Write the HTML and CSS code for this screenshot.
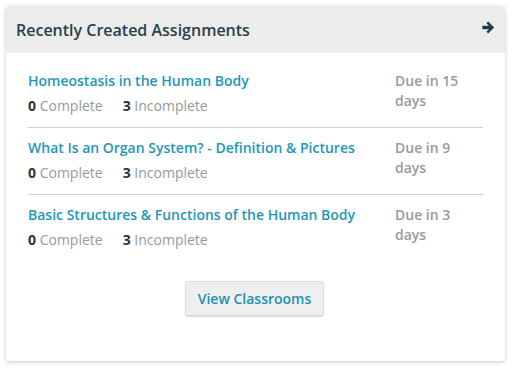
FILE: index.html
```html
<!DOCTYPE html>
<html>
<head>
<meta charset="utf-8">
<link rel="stylesheet" href="styles.css">
</head>
<body>
<div class="card">
  <div class="card-header">
    <h2 class="card-title">Recently Created Assignments</h2>
    <svg class="arrow" viewBox="0 0 12 12" width="13" height="13"><path d="M0.3 4.4H6.4L4.1 2.1L5.7 0.5L11.2 6L5.7 11.5L4.1 9.9L6.4 7.6H0.3Z" fill="#1d3b4c"/></svg>
  </div>
  <div class="card-body">
    <div class="item">
      <div class="item-main">
        <a class="item-title">Homeostasis in the Human Body</a>
        <div class="stats"><span class="stat"><b>0</b> Complete</span><span class="stat"><b>3</b> Incomplete</span></div>
      </div>
      <div class="due">Due in 15 days</div>
    </div>
    <div class="item">
      <div class="item-main">
        <a class="item-title">What Is an Organ System? - Definition &amp; Pictures</a>
        <div class="stats"><span class="stat"><b>0</b> Complete</span><span class="stat"><b>3</b> Incomplete</span></div>
      </div>
      <div class="due">Due in 9 days</div>
    </div>
    <div class="item item-last">
      <div class="item-main">
        <a class="item-title">Basic Structures &amp; Functions of the Human Body</a>
        <div class="stats"><span class="stat"><b>0</b> Complete</span><span class="stat"><b>3</b> Incomplete</span></div>
      </div>
      <div class="due">Due in 3 days</div>
    </div>
    <div class="actions">
      <button class="btn">View Classrooms</button>
    </div>
  </div>
</div>
</body>
</html>
```
FILE: styles.css
```css
html, body {
  margin: 0;
  padding: 0;
  background: #ffffff;
}
body {
  padding: 6px 7px 7px 6px;
  font-family: "Open Sans", "Noto Sans", sans-serif;
}
.card {
  width: 499px;
  height: 355px;
  background: #fff;
  border-radius: 4px;
  box-shadow: 0 1px 4px rgba(0,0,0,0.22);
  overflow: hidden;
  box-sizing: border-box;
}
.card-header {
  height: 47px;
  background: #ececec;
  display: flex;
  align-items: center;
  justify-content: space-between;
  padding: 0 10px 0 10px;
}
.card-title {
  margin: 0;
  font-size: 16px;
  font-weight: 600;
  color: #2a3f4d;
  line-height: 22px;
  padding-top: 1px;
}
.arrow {
  margin-top: -5px;
}
.card-body {
  padding: 8px 22px 0 22px;
}
.item {
  display: flex;
  justify-content: space-between;
  padding: 10px 0 11px;
  border-bottom: 1px solid #cfcfcf;
}
.item-last {
  border-bottom: none;
}
.item-main {
  display: flex;
  flex-direction: column;
  gap: 4px;
}
.item-title {
  font-size: 14px;
  font-weight: 600;
  line-height: 20px;
  color: #1f97b8;
}
.stats {
  font-size: 14px;
  line-height: 20px;
  color: #999;
  display: flex;
  gap: 20px;
  padding-top: 1px;
}
.stats b {
  color: #333;
  font-weight: 700;
}
.due {
  width: 88px;
  font-size: 14px;
  font-weight: 600;
  line-height: 20px;
  color: #9a9a9a;
}
.actions {
  display: flex;
  justify-content: center;
  padding-top: 20px;
}
.btn {
  font-family: "Open Sans", "Noto Sans", sans-serif;
  font-size: 14px;
  font-weight: 600;
  color: #1f8fb2;
  background: #efefef;
  border: 1px solid #dcdcdc;
  border-radius: 3px;
  box-shadow: 0 1px 1px rgba(0,0,0,0.15);
  height: 35px;
  width: 139px;
  padding: 0;
  margin-left: -2px;
}
```
